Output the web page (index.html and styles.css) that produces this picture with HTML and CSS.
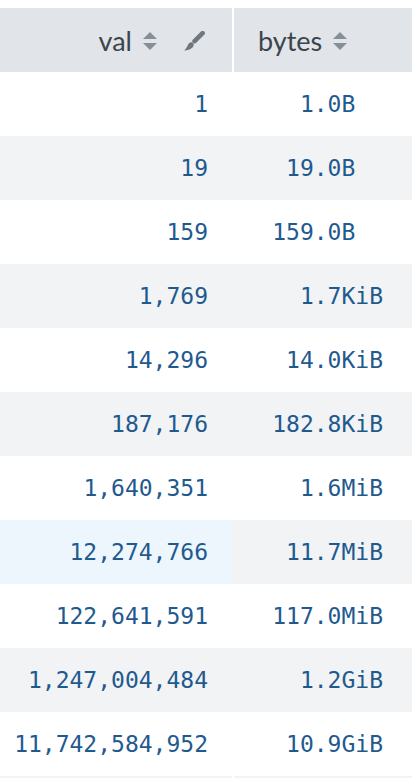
FILE: index.html
```html
<!DOCTYPE html>
<html>
<head>
<meta charset="utf-8">
<link rel="stylesheet" href="styles.css">
</head>
<body>
<table class="grid">
  <thead>
    <tr>
      <th class="h-val">
        <span class="h-inner">
          <span class="h-label">val</span>
          <svg class="sort" viewBox="0 0 14 22" width="14" height="22"><path d="M7 2 L14 9 L0 9 Z"/><path d="M0 13 L14 13 L7 20 Z"/></svg>
          <svg class="brush" viewBox="0 0 21 20" width="21" height="20"><line x1="18.6" y1="2.2" x2="10.6" y2="10.2" stroke="#6e7780" stroke-width="4.6" stroke-linecap="round"/><path d="M8.6 11.4 C7 11 5.3 11.6 4.4 13 C3.6 14.2 3.2 15.6 2.4 16.8 C1.8 17.8 1.1 18.6 0.3 19.4 C2 19.6 4.2 19.2 6 18.3 C8.2 17.1 9.9 15.3 9.8 13.2 Z"/></svg>
        </span>
      </th>
      <th class="h-bytes">
        <span class="h-inner">
          <span class="h-label">bytes</span>
          <svg class="sort" viewBox="0 0 14 22" width="14" height="22"><path d="M7 2 L14 9 L0 9 Z"/><path d="M0 13 L14 13 L7 20 Z"/></svg>
        </span>
      </th>
    </tr>
  </thead>
  <tbody>
    <tr><td class="c-val">1</td><td class="c-bytes">1.0B&nbsp;&nbsp;</td></tr>
    <tr><td class="c-val">19</td><td class="c-bytes">19.0B&nbsp;&nbsp;</td></tr>
    <tr><td class="c-val">159</td><td class="c-bytes">159.0B&nbsp;&nbsp;</td></tr>
    <tr><td class="c-val">1,769</td><td class="c-bytes">1.7KiB</td></tr>
    <tr><td class="c-val">14,296</td><td class="c-bytes">14.0KiB</td></tr>
    <tr><td class="c-val">187,176</td><td class="c-bytes">182.8KiB</td></tr>
    <tr><td class="c-val">1,640,351</td><td class="c-bytes">1.6MiB</td></tr>
    <tr class="hover"><td class="c-val">12,274,766</td><td class="c-bytes">11.7MiB</td></tr>
    <tr><td class="c-val">122,641,591</td><td class="c-bytes">117.0MiB</td></tr>
    <tr><td class="c-val">1,247,004,484</td><td class="c-bytes">1.2GiB</td></tr>
    <tr><td class="c-val">11,742,584,952</td><td class="c-bytes">10.9GiB</td></tr>
  </tbody>
</table>
</body>
</html>
```
FILE: styles.css
```css
html, body {
  margin: 0;
  padding: 0;
  background: #ffffff;
}
body {
  padding-top: 8px;
}
.grid {
  border-collapse: collapse;
  border-spacing: 0;
  width: 412px;
  table-layout: fixed;
  border-bottom: 2px solid #f2f3f5;
}
.grid th {
  height: 64px;
  padding: 0;
  background: #e1e4e8;
  font-family: "Lato", "Open Sans", sans-serif;
  font-weight: 400;
  font-size: 27px;
  color: #3c444d;
  vertical-align: middle;
}
.h-val {
  width: 232px;
  text-align: right;
  border-right: 2px solid #ffffff;
}
.h-bytes {
  text-align: left;
}
.h-inner {
  display: inline-flex;
  align-items: center;
}
.h-val .h-inner {
  padding-right: 27px;
}
.h-bytes .h-inner {
  padding-left: 25px;
}
.h-label {
  position: relative;
  left: -1px;
}
.sort {
  fill: #868e96;
  margin-left: 10px;
  margin-top: 2px;
}
.brush {
  fill: #6e7780;
  margin-left: 27px;
  margin-top: 1px;
}
.grid td {
  height: 64px;
  padding: 0;
  font-family: "DejaVu Sans Mono", "Liberation Mono", monospace;
  font-size: 23px;
  color: #1f5a8f;
  text-align: right;
  vertical-align: middle;
  white-space: pre;
}
.c-val {
  padding-right: 24px !important;
  border-right: 2px solid transparent;
}
.c-bytes {
  padding-right: 29px !important;
}
.grid tbody tr:nth-child(even) td {
  background: #f2f3f5;
}
.grid tbody tr.hover td.c-val {
  background: #edf5fd;
}
.grid tbody tr.hover td.c-bytes {
  background: #f2f3f5;
}
```
